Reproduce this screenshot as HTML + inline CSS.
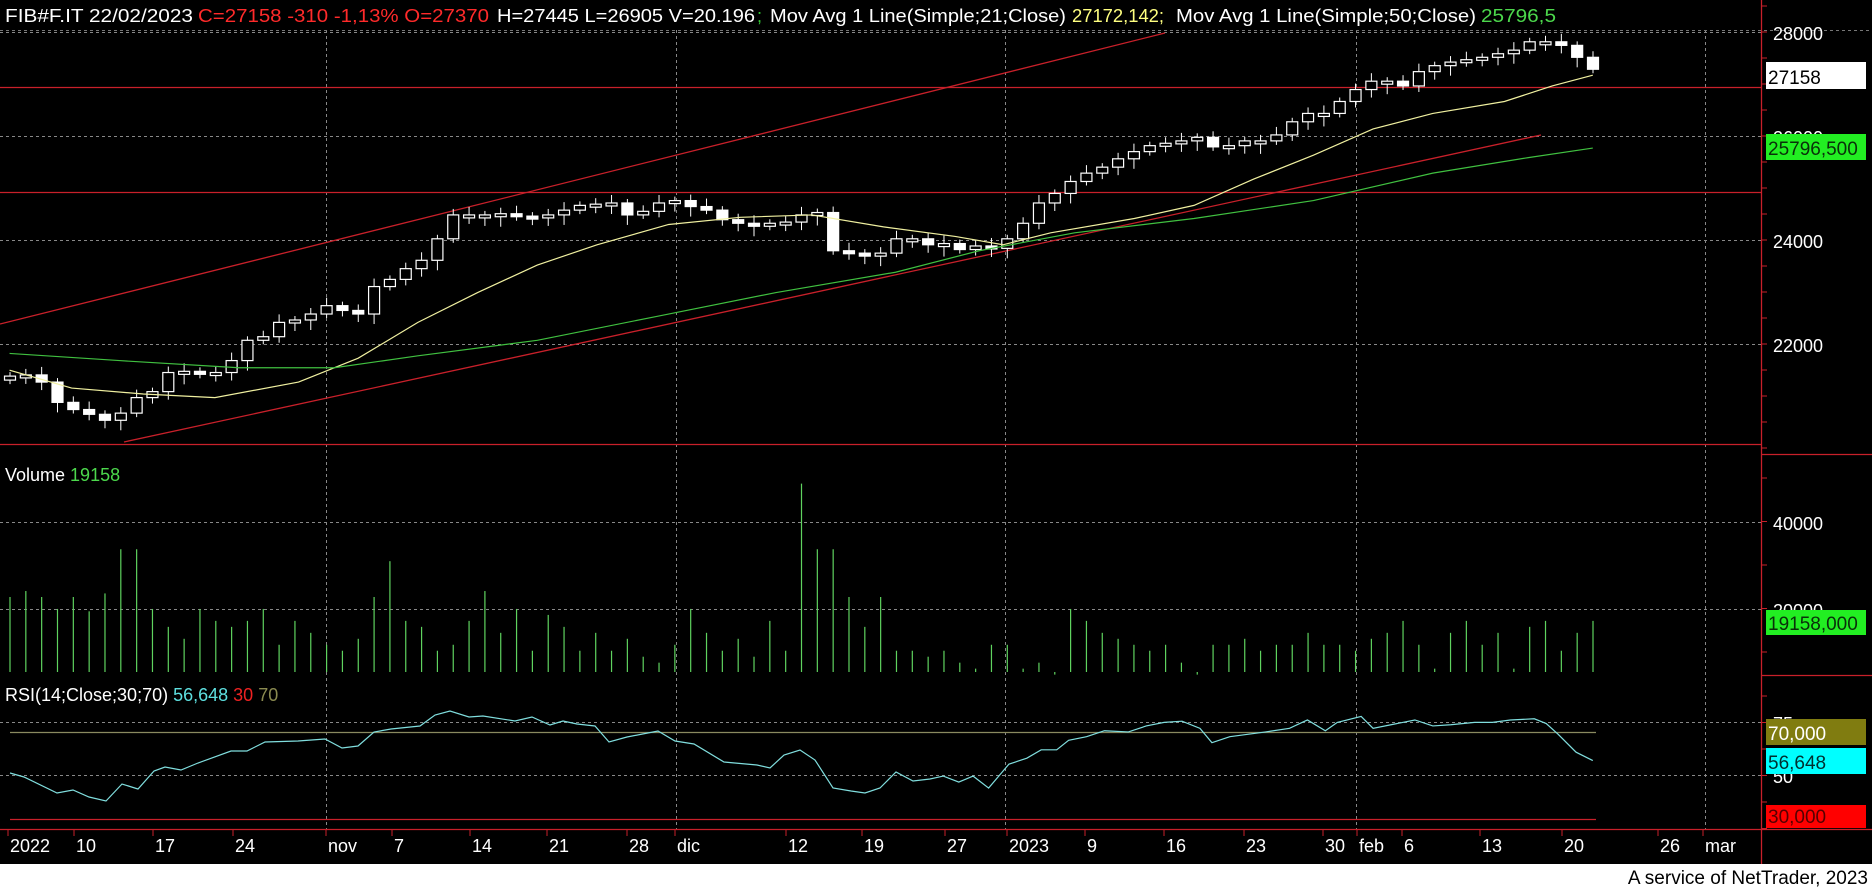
<!DOCTYPE html>
<html><head><meta charset="utf-8"><style>
html,body{margin:0;padding:0;background:#000;width:1872px;height:888px;overflow:hidden}
svg{display:block}
text{font-family:"Liberation Sans",sans-serif}
</style></head><body>
<svg id="s" width="1872" height="888" xmlns="http://www.w3.org/2000/svg">
<rect width="1872" height="888" fill="#000"/>
<rect x="0" y="864" width="1872" height="24" fill="#fff"/>
<text x="1868" y="884" font-size="19" fill="#000" text-anchor="end">A service of NetTrader, 2023</text>
<g id="g"></g>
<g font-size="18">
<text x="5" y="22" fill="#fff" textLength="188" lengthAdjust="spacingAndGlyphs">FIB#F.IT 22/02/2023</text>
<text x="198" y="22" fill="#ff2a2a" textLength="291" lengthAdjust="spacingAndGlyphs">C=27158 -310 -1,13% O=27370</text>
<text x="497" y="22" fill="#fff" textLength="258" lengthAdjust="spacingAndGlyphs">H=27445 L=26905 V=20.196</text>
<text x="757" y="22" fill="#3c3">;</text>
<text x="770" y="22" fill="#fff" textLength="296" lengthAdjust="spacingAndGlyphs">Mov Avg 1 Line(Simple;21;Close)</text>
<text x="1072" y="22" fill="#ffff80" textLength="92" lengthAdjust="spacingAndGlyphs">27172,142;</text>
<text x="1176" y="22" fill="#fff" textLength="300" lengthAdjust="spacingAndGlyphs">Mov Avg 1 Line(Simple;50;Close)</text>
<text x="1481" y="22" fill="#4cd84c" textLength="75" lengthAdjust="spacingAndGlyphs">25796,5</text>
<text x="5" y="481" fill="#fff">Volume <tspan fill="#4cd84c">19158</tspan></text>
<text x="5" y="701" fill="#fff">RSI(14;Close;30;70) <tspan fill="#5ee0e0">56,648</tspan> <tspan fill="#e22">30</tspan> <tspan fill="#8a8a50">70</tspan></text>
</g>
</svg>
<script>
(function(){
var g=document.getElementById('g'),NS='http://www.w3.org/2000/svg',S=1.194;
function el(t,a,txt){var e=document.createElementNS(NS,t);for(var k in a)e.setAttribute(k,a[k]);if(txt!=null)e.textContent=txt;g.appendChild(e);return e;}
function line(x1,y1,x2,y2,c,w,d){var a={x1:x1,y1:y1,x2:x2,y2:y2,stroke:c,'stroke-width':w||1};if(d)a['stroke-dasharray']=d;el('line',a);}
function poly(pts,c,w){el('polyline',{points:pts.map(function(p){return p[0]+','+p[1]}).join(' '),fill:'none',stroke:c,'stroke-width':w||1});}
var AX=1761;
[32,136,240,344,522,609,722,775].forEach(function(y){line(0,y+.5,AX,y+.5,'#888',1,'3,3');});
[326,676,1005,1356,1705].forEach(function(x){line(x+.5,30,x+.5,829,'#888',1,'3,3');});
line(0,30.5,1872,30.5,'#777',1,'3,3');
[87,192,444].forEach(function(y){line(0,y+.5,AX,y+.5,'#c8202a',1.3);});
line(AX,454.5,1872,454.5,'#c8202a',1.3);
line(AX,675.5,1872,675.5,'#c8202a',1.3);
line(0,829.5,1872,829.5,'#c8202a',1.3);
line(10,819.5,1596,819.5,'#c8202a',1.3);
line(10,732.5,1596,732.5,'#8a8a60',1.3);
line(AX+.5,0,AX+.5,864,'#c8202a',1.3);
for(var y=6;y<454;y+=26)line(AX,y,AX+6,y,'#c8202a',1);
for(var y=478;y<675;y+=43.5)line(AX,y,AX+6,y,'#c8202a',1);
for(var y=696;y<829;y+=26.5)line(AX,y,AX+6,y,'#c8202a',1);
line(0,324,1165,33,'#c8202a',1.3);
line(124,442,1541,135,'#c8202a',1.3);
[['28000',40],['26000',144],['24000',248],['22000',352],['40000',530],['20000',617],['75',730],['50',783]].forEach(function(l){el('text',{x:1773,y:l[1],fill:'#fff','font-size':18},l[0]);});
[['2022',10],['10',76],['17',155],['24',235],['nov',328],['7',394],['14',472],['21',549],['28',629],['dic',677],['12',788],['19',864],['27',947],['2023',1009],['9',1087],['16',1166],['23',1246],['30',1325],['feb',1359],['6',1404],['13',1482],['20',1564],['26',1660],['mar',1705]].forEach(function(l){el('text',{x:l[1],y:852,fill:'#fff','font-size':18},l[0]);line(l[1]-2,829,l[1]-2,836,'#c8202a',1);});
var cl=[315,314,320,337,343,347,352,346,333,328,312,311,313,312,302,285,282,270,268,263,256,260,263,240,234,225,218,200,180,180,180,179,181,182,180,176,172,171,170,180,177,170,168,173,176,184,187,188,187,186,180,178,210,212,214,212,200,200,205,204,209,206,208,200,187,170,162,152,145,140,133,127,122,120,118,115,123,122,118,118,113,102,95,95,85,75,68,68,72,60,55,52,50,48,45,42,35,35,38,48,58];
var n=cl.length,dx=(1593-10)/(n-1);
var prev=cl[0]*S+4;
for(var i=0;i<n;i++){var x=10+i*dx,c=cl[i]*S,o=prev;var tp=Math.min(o,c),bt=Math.max(o,c);if(bt-tp<3){bt=tp+3;}
 line(x,tp-4-(i%3)*2,x,bt+4+(i%4)*2,'#fff',1);
 var down=c>o;
 el('rect',{x:x-5.5,y:tp,width:11,height:bt-tp,fill:down?'#fff':'#000',stroke:'#fff','stroke-width':1.2});
 prev=c;}
var ma21=[[8,310],[60,325],[120,330],[180,333],[250,320],[300,300],[350,270],[400,245],[450,222],[500,205],[560,188],[620,182],[680,180],[740,190],[800,198],[840,205],[880,195],[950,183],[1000,172],[1050,150],[1100,130],[1150,108],[1200,95],[1260,85],[1300,72],[1334,63]];
var ma50=[[8,296],[100,302],[200,308],[280,308],[350,298],[450,285],[550,265],[650,245],[750,228],[820,210],[900,195],[1000,183],[1100,168],[1200,145],[1280,132],[1334,124]];
poly(ma21.map(function(p){return[p[0]*S,p[1]*S]}),'#f0f0a0',1.2);
poly(ma50.map(function(p){return[p[0]*S,p[1]*S]}),'#40c040',1.2);
var vt=[500,495,500,510,500,512,497,460,460,510,525,535,510,520,525,520,510,540,520,530,540,545,535,500,470,520,525,545,540,520,495,530,510,545,515,525,545,530,545,535,550,555,540,510,530,545,535,550,520,545,405,460,460,500,525,500,545,545,550,545,555,560,540,540,560,555,565,510,520,530,535,540,545,540,555,565,540,540,535,545,540,540,530,540,540,545,535,530,520,540,560,530,520,540,530,560,525,520,545,530,520];
for(var i=0;i<n;i++){var x=10+i*dx;line(x,672,x,(vt[i]||540)*S,'#5fd35f',1.2);}
var r1=[[10,773],[24,777],[57,793],[73,790],[89,797],[106,801],[122,784],[138,789],[154,771],[165,767],[181,770],[198,763],[231,751],[247,751],[265,742],[298,741],[325,739],[342,748],[358,746],[374,732],[391,729],[420,726],[435,715],[450,711],[469,717],[483,716],[515,721],[532,717],[550,725],[563,721],[577,724],[595,726],[609,742],[627,737],[658,731],[675,741],[694,744],[724,762],[757,765],[770,768],[784,755],[800,750],[815,760],[833,788],[851,791],[865,793],[880,788],[896,772],[913,781],[930,779]];
var r2=[[790,650],[803,655],[815,650],[828,660],[845,640],[860,635],[872,628],[885,628],[895,620],[910,617],[925,612],[945,613],[960,608],[975,605],[990,604],[1005,610],[1015,622],[1030,617],[1045,615],[1060,613],[1080,610],[1095,603],[1110,612],[1120,605],[1140,600],[1150,610],[1165,607],[1185,603],[1200,608],[1215,607],[1235,605],[1250,605],[1265,603],[1285,602],[1295,606],[1305,615],[1320,630],[1334,637]].map(function(p){return[p[0]*S,p[1]*S]});
poly(r1.concat(r2),'#80dede',1.2);
function box(y,h,bg,fg,t){el('rect',{x:1766,y:y,width:100,height:h,fill:bg});el('text',{x:1768,y:y+h-5,fill:fg,'font-size':19},t);}
box(62,27,'#fff','#000','27158');
box(134,26,'#22ee22','#0a300a','25796,500');
box(610,25,'#22ee22','#0a300a','19158,000');
box(719,26,'#807c10','#fff','70,000');
box(748,26,'#00ffff','#003030','56,648');
box(805,23,'#ff0000','#500','30,000');
})();
</script>
</body></html>
